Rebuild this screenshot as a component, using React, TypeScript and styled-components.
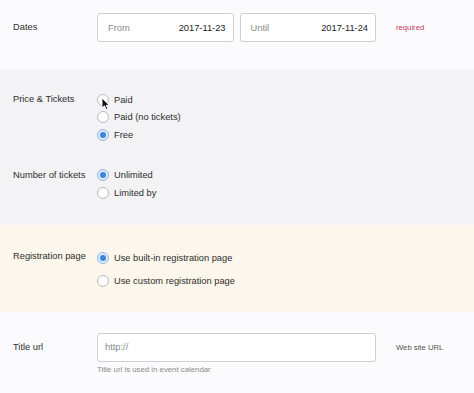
import React from 'react';
import styled, { createGlobalStyle } from 'styled-components';

const GlobalStyle = createGlobalStyle`
  html, body {
    margin: 0;
    padding: 0;
    background: #fbfbfd;
  }
  body {
    font-family: "Liberation Sans", Arial, sans-serif;
    color: #333;
    -webkit-font-smoothing: antialiased;
  }
`;

const Page = styled.div`
  width: 474px;
  height: 393px;
  overflow: hidden;
  position: relative;
`;

const Section = styled.section<{ $bg: string; $pad: string; $gap?: number }>`
  background: ${(p) => p.$bg};
  padding: ${(p) => p.$pad};
  display: flex;
  flex-direction: column;
  gap: ${(p) => p.$gap ?? 0}px;
`;

const Row = styled.div<{ $align?: string }>`
  display: grid;
  grid-template-columns: 84px 279px auto;
  align-items: ${(p) => p.$align || 'start'};
  padding-left: 13px;
`;

const Label = styled.div<{ $lh?: number }>`
  font-size: 9.3px;
  line-height: ${(p) => p.$lh || 17}px;
  color: #2e2e2e;
`;

const Hint = styled.div<{ $red?: boolean; $lh?: number }>`
  margin-left: 20px;
  font-size: 7.7px;
  line-height: ${(p) => p.$lh || 12}px;
  color: ${(p) => (p.$red ? '#c0395a' : '#555')};
`;

const Pair = styled.div`
  display: flex;
  gap: 6px;
`;

const DateBox = styled.div`
  flex: 1;
  height: 29px;
  box-sizing: border-box;
  border: 1px solid #cfcfd3;
  border-radius: 3px;
  background: #fff;
  display: flex;
  align-items: center;
  justify-content: space-between;
  padding: 0 7px 0 10px;
  font-size: 9.3px;
`;

const Placeholder = styled.span`
  color: #8a8a8a;
`;

const Value = styled.span`
  color: #222;
`;

const Options = styled.div<{ $h: number }>`
  display: flex;
  flex-direction: column;
  & > * {
    height: ${(p) => p.$h}px;
  }
`;

const Option = styled.label`
  display: flex;
  align-items: center;
  gap: 5px;
  font-size: 9.3px;
  color: #2e2e2e;
`;

const Circle = styled.span<{ $on?: boolean }>`
  width: 12px;
  height: 12px;
  box-sizing: border-box;
  border-radius: 50%;
  border: 1px solid ${(p) => (p.$on ? '#8db8ea' : '#b9b9bc')};
  background: ${(p) => (p.$on ? '#dfeaf8' : '#fff')};
  display: flex;
  align-items: center;
  justify-content: center;
  &::after {
    content: '';
    display: ${(p) => (p.$on ? 'block' : 'none')};
    width: 6px;
    height: 6px;
    border-radius: 50%;
    background: #3c86da;
  }
`;

const Field = styled.div`
  display: flex;
  flex-direction: column;
`;

const TextBox = styled.div`
  height: 29px;
  box-sizing: border-box;
  border: 1px solid #cfcfd3;
  border-radius: 3px;
  background: #fff;
  display: flex;
  align-items: center;
  padding-left: 7px;
  font-size: 9.3px;
  color: #8a8a8a;
`;

const Help = styled.div`
  margin-top: 3px;
  font-size: 7.8px;
  line-height: 10px;
  color: #8a8a8a;
`;

const Cursor = styled.svg`
  position: absolute;
  left: 101px;
  top: 97px;
`;

type Opt = { text: string; on?: boolean };

const RadioGroup = ({ items, h }: { items: Opt[]; h: number }) => (
  <Options $h={h}>
    {items.map((o) => (
      <Option key={o.text}>
        <Circle $on={o.on} />
        {o.text}
      </Option>
    ))}
  </Options>
);

const App = () => {
  return (
    <Page>
      <GlobalStyle />
      <Section $bg="#fbfbfd" $pad="13px 0 28px">
        <Row $align="center">
          <Label>Dates</Label>
          <Pair>
            <DateBox>
              <Placeholder>From</Placeholder>
              <Value>2017-11-23</Value>
            </DateBox>
            <DateBox>
              <Placeholder>Until</Placeholder>
              <Value>2017-11-24</Value>
            </DateBox>
          </Pair>
          <Hint $red>required</Hint>
        </Row>
      </Section>

      <Section $bg="#f3f2f5" $pad="21px 0 23px" $gap={23}>
        <Row>
          <Label>Price &amp; Tickets</Label>
          <RadioGroup
            h={17.5}
            items={[{ text: 'Paid' }, { text: 'Paid (no tickets)' }, { text: 'Free', on: true }]}
          />
        </Row>
        <Row>
          <Label>Number of tickets</Label>
          <RadioGroup h={17.5} items={[{ text: 'Unlimited', on: true }, { text: 'Limited by' }]} />
        </Row>
      </Section>

      <Section $bg="#fcf6ec" $pad="22px 0 19px">
        <Row>
          <Label $lh={19}>Registration page</Label>
          <RadioGroup
            h={23}
            items={[
              { text: 'Use built-in registration page', on: true },
              { text: 'Use custom registration page' },
            ]}
          />
        </Row>
      </Section>

      <Section $bg="#fbfbfd" $pad="21px 0 19px">
        <Row>
          <Label $lh={29}>Title url</Label>
          <Field>
            <TextBox>http://</TextBox>
            <Help>Title url is used in event calendar</Help>
          </Field>
          <Hint $lh={29}>Web site URL</Hint>
        </Row>
      </Section>

      <Cursor width="9" height="14" viewBox="0 0 9 14">
        <path d="M1 1 L1 11 L3.5 8.8 L5.2 12.6 L6.8 11.9 L5.2 8.3 L8.2 8.3 Z" fill="#111" stroke="#fff" strokeWidth="0.9" strokeLinejoin="round" />
      </Cursor>
    </Page>
  );
};

export default App;
